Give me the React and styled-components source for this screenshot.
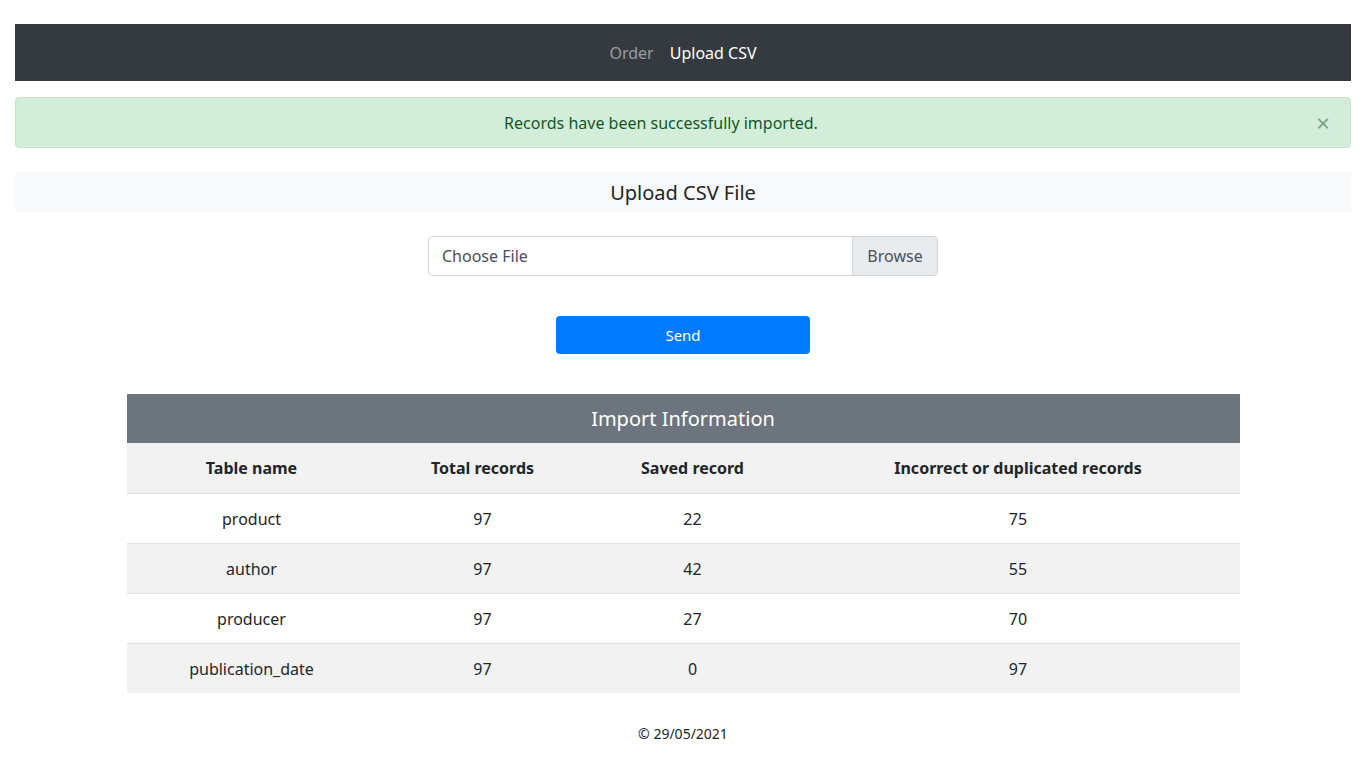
import React from 'react'
import styled, { createGlobalStyle } from 'styled-components'

const rows = [
  { name: 'product', total: 97, saved: 22, bad: 75 },
  { name: 'author', total: 97, saved: 42, bad: 55 },
  { name: 'producer', total: 97, saved: 27, bad: 70 },
  { name: 'publication_date', total: 97, saved: 0, bad: 97 },
]

function App() {
  return (
    <>
      <GlobalStyle />
      <Page>
        <Navbar>
          <NavLink>Order</NavLink>
          <NavLink active>Upload CSV</NavLink>
        </Navbar>

        <Alert>
          Records have been successfully imported.
          <CloseButton aria-label="Close">×</CloseButton>
        </Alert>

        <SectionTitle>Upload CSV File</SectionTitle>

        <Form>
          <FileInput>
            <FileLabel>Choose File</FileLabel>
            <BrowseLabel>Browse</BrowseLabel>
          </FileInput>
          <SendButton>Send</SendButton>
        </Form>

        <Table>
          <colgroup>
            <col style={{ width: 250 }} />
            <col style={{ width: 212 }} />
            <col style={{ width: 208 }} />
            <col />
          </colgroup>
          <thead>
            <tr>
              <Caption colSpan={4}>Import Information</Caption>
            </tr>
            <HeadRow>
              <Th>Table name</Th>
              <Th>Total records</Th>
              <Th>Saved record</Th>
              <Th>Incorrect or duplicated records</Th>
            </HeadRow>
          </thead>
          <tbody>
            {rows.map((r, i) => (
              <Row key={r.name} striped={i % 2 === 1}>
                <Td>{r.name}</Td>
                <Td>{r.total}</Td>
                <Td>{r.saved}</Td>
                <Td>{r.bad}</Td>
              </Row>
            ))}
          </tbody>
        </Table>

        <Footer>© 29/05/2021</Footer>
      </Page>
    </>
  )
}

export default App

const GlobalStyle = createGlobalStyle`
  body {
    margin: 0;
    font-family: "Noto Sans", "Open Sans", sans-serif;
    color: #212529;
    background: #fff;
  }
`;

const Page = styled.div`
  padding: 24px 15px 0;
`;

const Navbar = styled.nav`
  height: 57px;
  background: #343a40;
  display: flex;
  align-items: center;
  justify-content: center;
  gap: 16px;
`;

const NavLink = styled.a`
  font-size: 16px;
  color: ${p => (p.active ? '#fff' : 'rgba(255, 255, 255, 0.5)')};
  cursor: pointer;
`;

const Alert = styled.div`
  position: relative;
  margin-top: 16px;
  height: 51px;
  box-sizing: border-box;
  padding: 0 64px 0 20px;
  background: #d4edda;
  border: 1px solid #c3e6cb;
  border-radius: 4px;
  color: #155724;
  font-size: 16px;
  display: flex;
  align-items: center;
  justify-content: center;
`;

const CloseButton = styled.button`
  position: absolute;
  right: 20px;
  top: 50%;
  transform: translateY(-50%);
  border: none;
  background: none;
  padding: 0;
  font-family: inherit;
  font-size: 24px;
  line-height: 1;
  color: #155724;
  opacity: 0.5;
  cursor: pointer;
`;

const SectionTitle = styled.h2`
  margin: 24px 0 0;
  height: 40px;
  background: #f8f9fa;
  font-size: 20px;
  font-weight: 400;
  display: flex;
  align-items: center;
  justify-content: center;
`;

const Form = styled.div`
  display: flex;
  flex-direction: column;
  align-items: center;
  padding-top: 24px;
`;

const FileInput = styled.div`
  width: 510px;
  height: 40px;
  box-sizing: border-box;
  border: 1px solid #ced4da;
  border-radius: 4px;
  display: flex;
  overflow: hidden;
  font-size: 16px;
  color: #495057;
`;

const FileLabel = styled.span`
  flex: 1;
  display: flex;
  align-items: center;
  padding-left: 13px;
`;

const BrowseLabel = styled.span`
  width: 84px;
  display: flex;
  align-items: center;
  justify-content: center;
  background: #e9ecef;
  border-left: 1px solid #ced4da;
`;

const SendButton = styled.button`
  margin-top: 40px;
  width: 254px;
  height: 38px;
  border: none;
  border-radius: 4px;
  background: #007bff;
  color: #fff;
  font-family: inherit;
  font-size: 15px;
  cursor: pointer;
`;

const Table = styled.table`
  width: 1113px;
  margin: 40px auto 0;
  border-collapse: collapse;
  table-layout: fixed;
  text-align: center;
  font-size: 16px;
`;

const Caption = styled.th`
  height: 49px;
  padding: 0;
  background: #6c757d;
  color: #fff;
  font-size: 20px;
  font-weight: 400;
`;

const HeadRow = styled.tr`
  background: #f2f2f2;
`;

const Th = styled.th`
  height: 50px;
  padding: 0;
  font-weight: 700;
  border-bottom: 1px solid #dee2e6;
`;

const Row = styled.tr`
  background: ${p => (p.striped ? '#f2f2f2' : '#fff')};
  border-bottom: 1px solid #dee2e6;

  &:last-child {
    border-bottom: none;
  }
`;

const Td = styled.td`
  height: 49px;
  padding: 0;
`;

const Footer = styled.footer`
  margin-top: 31px;
  text-align: center;
  font-size: 14px;
`;
